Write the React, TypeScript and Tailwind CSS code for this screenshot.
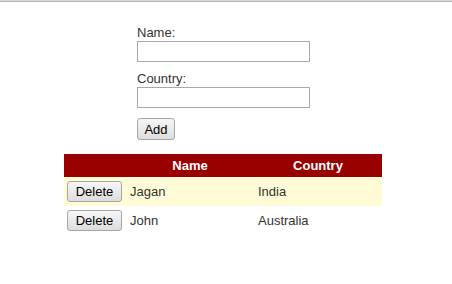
type Person = {
  name: string
  country: string
}

const people: Person[] = [
  { name: 'Jagan', country: 'India' },
  { name: 'John', country: 'Australia' },
]

const btn =
  'h-[21px] rounded-[3px] border border-[#a6a6a6] bg-gradient-to-b from-[#f6f6f6] to-[#dddddd] text-[13px] leading-none text-black'

export default function App() {
  return (
    <div className="min-h-[284px] bg-white font-['Liberation_Sans',Arial,sans-serif] text-[13px] text-[#333]">
      <div className="h-px bg-[#d8d8d8]" />
      <div className="h-px bg-[#b4b4b4]" />

      <form className="ml-[137px] pt-[23px]" onSubmit={(e) => e.preventDefault()}>
        <label className="block leading-[15px]">Name:</label>
        <input className="mt-[1px] block h-[21px] w-[173px] border border-[#a9a9a9] bg-white" />
        <label className="mt-[9px] block leading-[15px]">Country:</label>
        <input className="mt-[1px] block h-[21px] w-[173px] border border-[#a9a9a9] bg-white" />
        <button className={`${btn} mt-[10px] h-[22px] w-[38px]`}>Add</button>
      </form>

      <table className="ml-[64px] mt-[14px] w-[318px] border-collapse text-left">
        <thead>
          <tr className="h-[23px] bg-[#990000] text-white">
            <th className="w-[62px] p-0" />
            <th className="w-[128px] p-0 text-center font-bold">Name</th>
            <th className="w-[128px] p-0 text-center font-bold">Country</th>
          </tr>
        </thead>
        <tbody>
          {people.map((p, i) => (
            <tr key={p.name} className={i % 2 === 0 ? 'h-[29px] bg-[#fffbd6]' : 'h-[29px]'}>
              <td className="pl-[3px]">
                <button className={`${btn} w-[55px]`}>Delete</button>
              </td>
              <td className="pl-[4px]">{p.name}</td>
              <td className="pl-[4px]">{p.country}</td>
            </tr>
          ))}
        </tbody>
      </table>
    </div>
  )
}
